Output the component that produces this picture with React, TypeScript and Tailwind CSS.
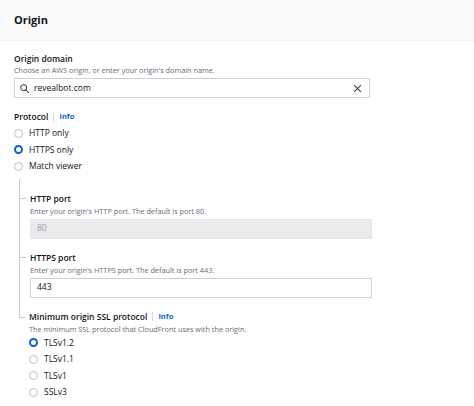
import React from "react";

const font = { fontFamily: '"Open Sans", "Noto Sans", Arial, sans-serif' };

const Radio: React.FC<{ label: string; checked?: boolean }> = ({ label, checked = false }) => (
  <div className="flex items-center gap-[6px] h-[16.5px]">
    <span
      className={`w-[9px] h-[9px] rounded-full flex-shrink-0 bg-white ${
        checked ? "border-[2.5px] border-[#0f62c7]" : "border border-[#b9bec6]"
      }`}
    />
    <span className="text-[8.5px] font-medium text-[#0f141a] leading-none">{label}</span>
  </div>
);

const Info: React.FC = () => (
  <>
    <span className="mx-[5px] w-px h-[9px] bg-[#d5dbdb]" />
    <span className="text-[7.5px] font-bold text-[#0f62c7]">Info</span>
  </>
);

const Label: React.FC<{ children: React.ReactNode }> = ({ children }) => (
  <span className="text-[8.5px] font-semibold text-[#0f141a] leading-[12px]">{children}</span>
);

const Desc: React.FC<{ children: React.ReactNode }> = ({ children }) => (
  <div className="text-[7.3px] text-[#5f6b7a] leading-[12px]">{children}</div>
);

export default function App() {
  return (
    <div className="w-[474px] h-[406px] bg-white overflow-hidden" style={font}>
      {/* Header */}
      <div className="h-[41px] bg-[#fafafa] border-b border-[#eef0f1] flex items-center px-[14px]">
        <h2 className="text-[11px] font-bold text-[#0f141a]">Origin</h2>
      </div>

      <div className="pl-[14px] pt-[12px]">
        {/* Origin domain */}
        <div className="h-[12px] flex items-center">
          <Label>Origin domain</Label>
        </div>
        <div className="text-[7.3px] text-[#5f6b7a] leading-[10px]">
          Choose an AWS origin, or enter your origin's domain name.
        </div>
        <div className="mt-[3px] w-[356px] h-[20px] border border-[#cfd3d8] flex items-center pl-[5px] pr-[7px] gap-[5px]">
          <svg width="9" height="9" viewBox="0 0 16 16" fill="none" stroke="#3b424b" strokeWidth="1.8">
            <circle cx="6.5" cy="6.5" r="5.2" />
            <path d="M10.4 10.4L15 15" strokeLinecap="round" />
          </svg>
          <span className="flex-1 text-[8.5px] text-[#0f141a] font-medium">revealbot.com</span>
          <svg width="9" height="9" viewBox="0 0 16 16" fill="none" stroke="#3b424b" strokeWidth="2">
            <path d="M2 2l12 12M14 2L2 14" />
          </svg>
        </div>

        {/* Protocol */}
        <div className="mt-[13px] flex items-center h-[12px]">
          <Label>Protocol</Label>
          <Info />
        </div>
        <div className="mt-[2px] flex flex-col">
          <Radio label="HTTP only" />
          <Radio label="HTTPS only" checked />
          <Radio label="Match viewer" />
        </div>

        {/* Nested settings tree */}
        <div className="ml-[5px] mt-[4px]">
          <div className="border-l border-[#c6cbd1] pt-[14px] pb-[13px] flex flex-col">
            <div className="flex items-center h-[12px]">
              <span className="w-[6px] h-px bg-[#c6cbd1] mr-[4px]" />
              <Label>HTTP port</Label>
            </div>
            <div className="pl-[10px]">
              <Desc>Enter your origin's HTTP port. The default is port 80.</Desc>
              <div className="mt-[2px] w-[342px] h-[20px] bg-[#e9ebed] border border-[#e3e5e7] flex items-center px-[6px]">
                <span className="text-[8.5px] text-[#9ba1a8]">80</span>
              </div>
            </div>

            <div className="mt-[13px] flex items-center h-[12px]">
              <span className="w-[6px] h-px bg-[#c6cbd1] mr-[4px]" />
              <Label>HTTPS port</Label>
            </div>
            <div className="pl-[10px]">
              <Desc>Enter your origin's HTTPS port. The default is port 443.</Desc>
              <div className="mt-[2px] w-[342px] h-[20px] border border-[#cfd3d8] flex items-center px-[6px]">
                <span className="text-[8.5px] text-[#0f141a] font-medium">443</span>
              </div>
            </div>
          </div>

          <div className="flex items-start h-[12px]">
            <span className="w-[6px] h-[7px] border-l border-b border-[#c6cbd1] mr-[4px]" />
            <span className="flex items-center h-[12px]">
              <Label>Minimum origin SSL protocol</Label>
              <Info />
            </span>
          </div>
          <div className="pl-[10px]">
            <Desc>The minimum SSL protocol that CloudFront uses with the origin.</Desc>
            <div className="flex flex-col">
              <Radio label="TLSv1.2" checked />
              <Radio label="TLSv1.1" />
              <Radio label="TLSv1" />
              <Radio label="SSLv3" />
            </div>
          </div>
        </div>
      </div>
    </div>
  );
}
